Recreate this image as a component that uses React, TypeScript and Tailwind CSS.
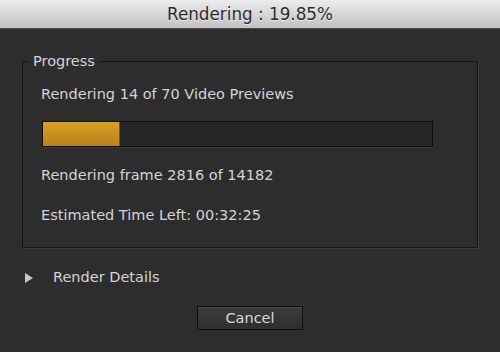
import React from "react";

const progress = 19.85;

function App() {
  const font = { fontFamily: '"DejaVu Sans", "Liberation Sans", sans-serif' };

  return (
    <div className="w-[500px] h-[352px] flex flex-col bg-[#2d2d2d] overflow-hidden" style={font}>
      {/* Title bar */}
      <div className="h-[29px] shrink-0 flex items-center justify-center bg-gradient-to-b from-[#ececec] to-[#c2c2c2] border-b border-[#4a4a4a]">
        <span className="text-[16.8px] leading-none text-[#2b2b2b] [text-shadow:0_1px_0_rgba(255,255,255,0.6)]">
          Rendering : {progress}%
        </span>
      </div>

      <div className="flex-1 flex flex-col">
        {/* Progress group */}
        <fieldset className="mt-[24px] ml-[22px] w-[456px] border border-[#161616] shadow-[1px_1px_0_#3d3d3d] px-0 pb-[23px] text-[14.5px] text-[#d2d4d8]">
          <legend className="ml-[7px] px-[3px] leading-[17px]">Progress</legend>
          <div className="pl-[18px] mt-[16px] leading-[17px]">Rendering 14 of 70 Video Previews</div>
          <div className="ml-[19px] mt-[18px] w-[391px] h-[26px] border border-[#0f0f0f] bg-[#272727] shadow-[0_1px_0_#3a3a3a]">
            <div
              className="h-full bg-gradient-to-b from-[#d9a028] to-[#b7821c] border-r border-[#7a5510]"
              style={{ width: `${progress}%` }}
            />
          </div>
          <div className="pl-[18px] mt-[20px] leading-[17px]">Rendering frame 2816 of 14182</div>
          <div className="pl-[18px] mt-[23px] leading-[17px]">Estimated Time Left: 00:32:25</div>
        </fieldset>

        {/* Render details */}
        <div className="mt-[21px] ml-[25px] flex items-center h-[17px] text-[14.5px] text-[#d2d4d8]">
          <svg width="8" height="10" viewBox="0 0 8 10" className="shrink-0">
            <path d="M0 0 L8 5 L0 10 Z" fill="#c4c6ca" />
          </svg>
          <span className="ml-[20px] leading-[17px]">Render Details</span>
        </div>

        {/* Cancel */}
        <div className="mt-[20px] flex justify-center">
          <button className="w-[106px] h-[24px] border border-[#0e0e0e] bg-gradient-to-b from-[#3c3c3c] to-[#2e2e2e] shadow-[inset_0_1px_0_#4a4a4a] text-[14.5px] leading-none text-[#d6d8dc]">
            Cancel
          </button>
        </div>
      </div>
    </div>
  );
}

export default App;
